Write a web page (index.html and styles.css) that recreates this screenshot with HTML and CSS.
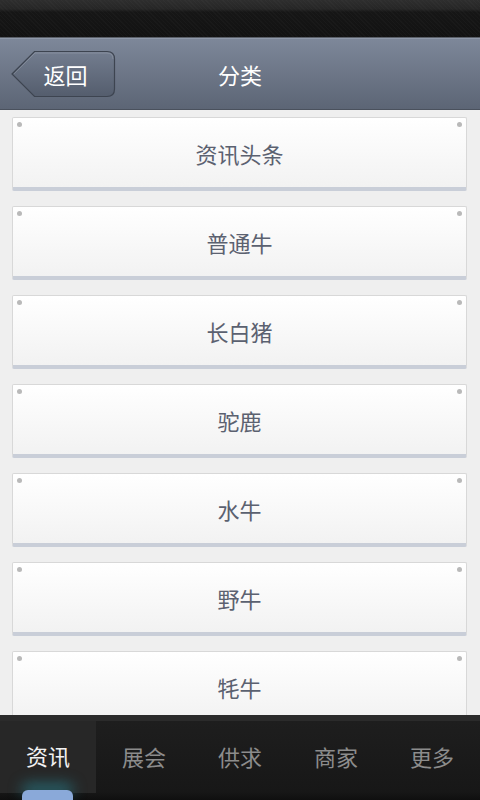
FILE: index.html
```html
<!DOCTYPE html>
<html lang="zh-CN">
<head>
    <meta charset="UTF-8">
    <meta name="viewport" content="width=device-width, initial-scale=1.0">
    <title>分类</title>
    <link rel="stylesheet" href="styles.css">
</head>
<body>
<div class="screen">
    <div class="status-bar"></div>

    <div class="header">
        <a class="back-btn" href="#">
            <svg class="back-shape" width="105" height="48" viewBox="0 0 105 48">
                <defs>
                    <linearGradient id="backFill" x1="0" y1="0" x2="0" y2="1">
                        <stop offset="0" stop-color="#737d8f"/>
                        <stop offset="1" stop-color="#545d6d"/>
                    </linearGradient>
                </defs>
                <path d="M1 24 L23.5 1.5 H96 Q103.5 1.5 103.5 9 V39 Q103.5 46.5 96 46.5 H23.5 Z" fill="url(#backFill)" stroke="#3d4450" stroke-width="1.2"/>
                <path d="M3 24 L24 3 H96 Q102 3 102 9" fill="none" stroke="rgba(255,255,255,0.15)" stroke-width="1"/>
            </svg>
            <span class="back-text">返回</span>
        </a>
        <div class="title">分类</div>
        <div class="header-spacer"></div>
    </div>

    <div class="list">
        <div class="card">资讯头条</div>
        <div class="card">普通牛</div>
        <div class="card">长白猪</div>
        <div class="card">驼鹿</div>
        <div class="card">水牛</div>
        <div class="card">野牛</div>
        <div class="card">牦牛</div>
    </div>

    <div class="tab-bar">
        <div class="tab active">资讯<span class="indicator"></span></div>
        <div class="tab">展会</div>
        <div class="tab">供求</div>
        <div class="tab">商家</div>
        <div class="tab">更多</div>
    </div>
</div>
</body>
</html>
```

FILE: styles.css
```css
* { box-sizing: border-box; }
body { margin: 0; font-family: "Noto Sans CJK SC", "Noto Sans", sans-serif; background: #efefef; }
.screen { width: 480px; height: 800px; display: flex; flex-direction: column; overflow: hidden; }

.status-bar { height: 38px; flex: none; border-bottom: 1px solid #5a5f68;
    background:
        repeating-linear-gradient(45deg, rgba(255,255,255,0.02) 0 1px, transparent 1px 3px),
        linear-gradient(#2e2e2e 0, #262626 9px, #161616 12px, #121212 100%); }

.header { height: 72px; flex: none; display: flex; align-items: center; padding: 0 12px;
    background: linear-gradient(#7d8799, #5c6575); border-top: 1px solid #8f99aa; border-bottom: 1px solid #4a515d; }
.back-btn { display: grid; width: 105px; height: 48px; text-decoration: none; flex: none; margin-left: -1px; }
.back-shape, .back-text { grid-area: 1 / 1; }
.back-text { color: #fff; font-size: 22px; align-self: center; justify-self: center; padding-left: 4px; margin-top: -1px; }
.title { flex: 1; text-align: center; color: #fff; font-size: 22px; margin-top: -1px; }
.header-spacer { width: 104px; flex: none; }

.list { flex: 1; overflow: hidden; padding: 7px 13px 0 12px; }
.card { position: relative; height: 74px; margin-bottom: 15px; display: flex; align-items: center; justify-content: center;
    font-size: 22px; color: #5b6170; padding-top: 1px;
    background: linear-gradient(#ffffff, #f2f2f2); border: 1px solid #d8d8d8; border-bottom: 4px solid #c9ced8; border-radius: 2px; }
.card::before, .card::after { content: ""; position: absolute; top: 4px; width: 5px; height: 5px; border-radius: 50%; background: #b9b9b9; }
.card::before { left: 4px; }
.card::after { right: 4px; }

.tab-bar { height: 85px; flex: none; display: flex; border-top: 6px solid #2b2b2b;
    background: linear-gradient(#1e1e1e, #171717 90%, #0f0f0f); }
.tab { position: relative; flex: 1; display: flex; align-items: center; justify-content: center; color: #8c8c8c; font-size: 22px; padding-bottom: 10px; }
.tab.active { color: #f2f2f2; background: #272727; margin-bottom: 7px; padding-bottom: 4px; }
.indicator { position: absolute; left: 22px; bottom: -7px; width: 51px; height: 10px; border-radius: 6px 6px 0 0; background: #8aa9d9;
    box-shadow: 0 -6px 14px rgba(40, 170, 190, 0.55); }
```
